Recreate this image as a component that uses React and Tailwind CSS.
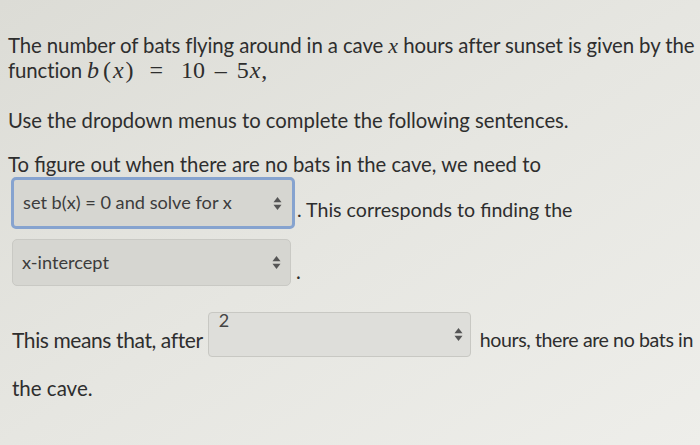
import React from 'react';

const Arrows = () => (
  <svg width="9" height="15" viewBox="0 0 9 15" className="shrink-0">
    <path d="M4.5 1 L8.5 6.3 L0.5 6.3 Z" fill="#555" />
    <path d="M4.5 14 L8.5 8.7 L0.5 8.7 Z" fill="#555" />
  </svg>
);

const Select = ({ value, className }) => (
  <div className={`flex items-center justify-between bg-[#d6d6d1] rounded-[5px] shrink-0 ${className}`}>
    <span className="text-[#3c3c3c] text-[18.2px]">{value}</span>
    <Arrows />
  </div>
);

const serif = { fontFamily: '"Liberation Serif", serif' };

export default function App() {
  return (
    <div
      className="w-[700px] h-[445px] overflow-hidden bg-linear-to-br from-[#dcdcd6] via-[#e6e6e1] to-[#eeeeea] text-[#2e2e2e] pl-2 text-[20.3px]"
      style={{ fontFamily: 'Lato, "Open Sans", sans-serif' }}
    >
      <p className="pt-[33px] leading-[24px] text-[20.4px] tracking-[-0.1px] whitespace-nowrap">
        The number of bats flying around in a cave{' '}
        <span className="italic text-[22px]" style={serif}>x</span>{' '}
        hours after sunset is given by the
        <br />
        function
        <span style={serif} className="text-[24px]">
          <i className="ml-[5px]">b</i>
          <span className="ml-[4px] tracking-[2px]">(<i>x</i>)</span>
          <span className="ml-[14px]">=</span>
          <span className="ml-[18px]">10</span>
          <span className="ml-[10px]">–</span>
          <span className="ml-[10px] tracking-[1px]">5<i>x</i>,</span>
        </span>
      </p>

      <p className="mt-[26px] leading-[24px]">
        Use the dropdown menus to complete the following sentences.
      </p>

      <p className="mt-[20px] leading-[24px]">
        To figure out when there are no bats in the cave, we need to
      </p>

      <div className="flex items-center mt-[1px]">
        <Select
          value="set b(x) = 0 and solve for x"
          className="w-[284px] h-[52px] ml-[3px] pl-[9px] pr-[10px] border-[3px] border-[#86a3cf]"
        />
        <span className="ml-[2px] mt-[14px] leading-[24px] text-[19.6px]">. This corresponds to finding the</span>
      </div>

      <div className="flex items-center mt-[10px]">
        <Select
          value="x-intercept"
          className="w-[279px] h-[47px] ml-[4px] pl-[9px] pr-[9px] border border-[#c9c9c4]"
        />
        <span className="ml-[5px] mt-[16px] leading-[24px]">.</span>
      </div>

      <div className="flex items-center mt-[26px] pl-[4px] whitespace-nowrap">
        <span className="mt-[10px] leading-[24px] text-[21px] tracking-[-0.4px]">This means that, after</span>
        <div className="ml-[5px] w-[263px] h-[45px] shrink-0 bg-[#dededa] border border-[#c8c8c3] rounded-[4px] flex justify-between pl-[10px] pr-[7px]">
          <span className="text-[18px] text-[#444] leading-[20px] mt-[-3px]">2</span>
          <div className="self-center"><Arrows /></div>
        </div>
        <span className="ml-[9px] mt-[10px] leading-[24px] text-[19.6px] tracking-[-0.4px]">hours, there are no bats in</span>
      </div>

      <p className="mt-[19px] pl-[4px] leading-[24px] text-[20.5px]">the cave.</p>
    </div>
  );
}
